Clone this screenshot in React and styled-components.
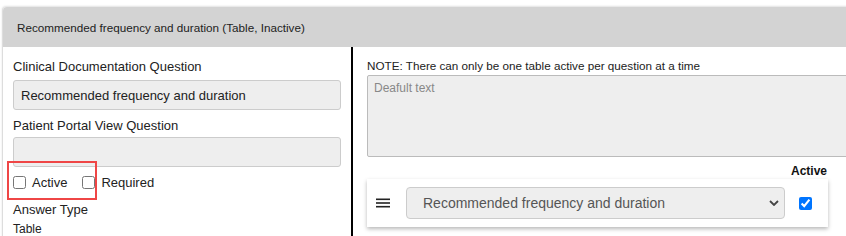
import React from "react";
import styled, { createGlobalStyle } from "styled-components";

const GlobalStyle = createGlobalStyle`
  html, body {
    margin: 0;
    padding: 0;
    background: #fff;
    overflow: hidden;
  }
  body {
    font-family: "Liberation Sans", Arial, sans-serif;
    color: #222;
  }
`;

const Page = styled.div`
  padding: 7px 0 0 2px;
`;

const Card = styled.div`
  width: 900px;
  border-left: 1px solid #ddd;
  border-radius: 4px 4px 0 0;
  box-shadow: 0 -1px 2px rgba(0, 0, 0, 0.12);
  background: #fff;
`;

const Header = styled.div`
  height: 40px;
  background: #d3d3d3;
  border-radius: 4px 4px 0 0;
  display: flex;
  align-items: center;
  padding-left: 14px;
  font-size: 11.7px;
  color: #222;
`;

const Body = styled.div`
  display: grid;
  grid-template-columns: 350px 1fr;
  height: 200px;
`;

const LeftPanel = styled.div`
  position: relative;
  padding: 12px 10px 0 10px;
  border-right: 2px solid #000;
`;

const Label = styled.div`
  font-size: 13px;
  line-height: 15px;
  color: #222;
  margin-top: ${(p) => p.$mt || 0}px;
  margin-bottom: ${(p) => p.$mb || 0}px;
`;

const TextInput = styled.input`
  display: block;
  box-sizing: border-box;
  width: 328px;
  height: 30px;
  margin: 0 0 ${(p) => p.$mb || 0}px 0;
  padding: 0 7px;
  background: #eee;
  border: 1px solid #ccc;
  border-radius: 3px;
  font-family: inherit;
  font-size: 13px;
  color: #222;
  outline: none;
`;

const CheckRow = styled.div`
  display: flex;
  align-items: center;
  height: 15px;
  margin-top: 8px;
  font-size: 13px;
`;

const CheckLabel = styled.label`
  display: flex;
  align-items: center;
  gap: 6px;
  margin-right: ${(p) => p.$mr || 0}px;
  color: #222;
`;

const Check = styled.input`
  width: 13px;
  height: 13px;
  margin: 0;
  accent-color: #0075ff;
`;

const Highlight = styled.div`
  position: absolute;
  left: 4px;
  top: 114px;
  width: 90px;
  height: 39px;
  box-sizing: border-box;
  border: 2px solid #ef4646;
  pointer-events: none;
`;

const SmallText = styled.div`
  font-size: 12px;
  line-height: 14px;
  margin-top: ${(p) => p.$mt || 0}px;
  color: #222;
`;

const RightPanel = styled.div`
  padding: 12px 0 0 14px;
`;

const Note = styled.div`
  font-size: 11.7px;
  line-height: 14px;
  color: #222;
  margin-bottom: 2px;
`;

const NoteArea = styled.textarea`
  display: block;
  box-sizing: border-box;
  width: 520px;
  height: 82px;
  margin: 0;
  padding: 5px 6px;
  background: #eee;
  border: 1px solid #bbb;
  border-radius: 2px;
  font-family: inherit;
  font-size: 12px;
  line-height: 14px;
  resize: none;
  outline: none;
  &::placeholder {
    color: #888;
  }
`;

const TableBlock = styled.div`
  width: 461px;
  margin-top: 7px;
`;

const ColHead = styled.div`
  text-align: right;
  padding-right: 1px;
  font-size: 12px;
  line-height: 14px;
  font-weight: bold;
  color: #111;
  margin-bottom: 1px;
`;

const TableRow = styled.div`
  display: flex;
  align-items: center;
  height: 48px;
  box-sizing: border-box;
  padding: 0 16px 0 9px;
  background: #fff;
  box-shadow: 0 2px 4px rgba(0, 0, 0, 0.28);
`;

const Handle = styled.svg`
  flex: none;
  margin-right: 16px;
`;

const SelectWrap = styled.div`
  position: relative;
  width: 380px;
  height: 32px;
  margin-right: 14px;
`;

const Select = styled.select`
  width: 100%;
  height: 100%;
  box-sizing: border-box;
  appearance: none;
  padding: 0 30px 0 16px;
  background: #eee;
  border: 1px solid #ccc;
  border-radius: 4px;
  font-family: inherit;
  font-size: 14px;
  color: #555;
  outline: none;
`;

const Chevron = styled.svg`
  position: absolute;
  right: 6px;
  top: 13px;
  pointer-events: none;
`;

export default function App() {
  return (
    <>
      <GlobalStyle />
      <Page>
        <Card>
          <Header>Recommended frequency and duration (Table, Inactive)</Header>
          <Body>
            <LeftPanel>
              <Label $mb={6}>Clinical Documentation Question</Label>
              <TextInput $mb={8} defaultValue="Recommended frequency and duration" />
              <Label $mb={4}>Patient Portal View Question</Label>
              <TextInput defaultValue="" />
              <CheckRow>
                <CheckLabel $mr={15}>
                  <Check type="checkbox" />
                  Active
                </CheckLabel>
                <CheckLabel>
                  <Check type="checkbox" />
                  Required
                </CheckLabel>
              </CheckRow>
              <Label $mt={12}>Answer Type</Label>
              <SmallText $mt={5}>Table</SmallText>
              <Highlight />
            </LeftPanel>
            <RightPanel>
              <Note>NOTE: There can only be one table active per question at a time</Note>
              <NoteArea placeholder="Deafult text" />
              <TableBlock>
                <ColHead>Active</ColHead>
                <TableRow>
                  <Handle width="14" height="10" viewBox="0 0 14 10">
                    <rect x="0" y="0.5" width="14" height="1.6" fill="#222" />
                    <rect x="0" y="4.2" width="14" height="1.6" fill="#222" />
                    <rect x="0" y="7.9" width="14" height="1.6" fill="#222" />
                  </Handle>
                  <SelectWrap>
                    <Select defaultValue="rfd">
                      <option value="rfd">Recommended frequency and duration</option>
                    </Select>
                    <Chevron width="10" height="6" viewBox="0 0 10 6">
                      <path d="M1 1 L5 5 L9 1" fill="none" stroke="#444" strokeWidth="1.8" />
                    </Chevron>
                  </SelectWrap>
                  <Check type="checkbox" defaultChecked />
                </TableRow>
              </TableBlock>
            </RightPanel>
          </Body>
        </Card>
      </Page>
    </>
  );
}
